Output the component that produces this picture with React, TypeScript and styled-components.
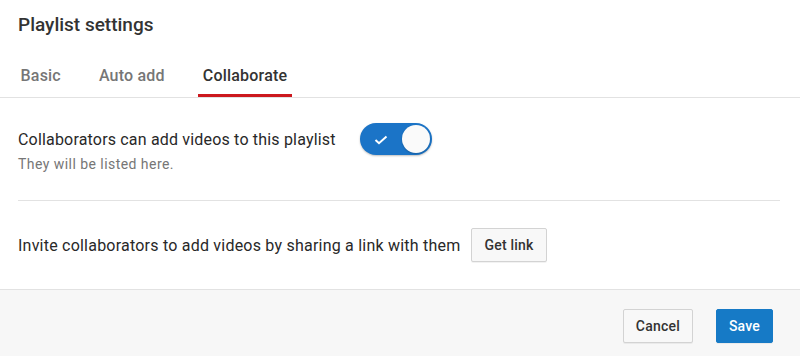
import React, { useState } from 'react';
import styled, { createGlobalStyle } from 'styled-components';

const GlobalStyle = createGlobalStyle`
  html, body {
    margin: 0;
    padding: 0;
    background: #fff;
  }
  body {
    font-family: Roboto, 'Liberation Sans', Arial, sans-serif;
    color: #282828;
    -webkit-font-smoothing: antialiased;
  }
`;

const Dialog = styled.div`
  width: 800px;
  height: 356px;
  display: flex;
  flex-direction: column;
  background: #fff;
  overflow: hidden;
`;

const Title = styled.h1`
  margin: 0;
  padding: 13px 18px 0;
  height: 23px;
  line-height: 23px;
  font-size: 19px;
  font-weight: 500;
  color: #333;
`;

const Tabs = styled.div`
  display: flex;
  gap: 29px;
  padding: 0 16px;
  height: 62px;
  box-sizing: border-box;
  align-items: flex-end;
  border-bottom: 1px solid #e2e2e2;
`;

const Tab = styled.button<{ $active?: boolean }>`
  border: 0;
  background: none;
  padding: 0 4.5px;
  height: 40px;
  box-sizing: border-box;
  font-family: inherit;
  font-size: 16px;
  letter-spacing: 0.2px;
  font-weight: 500;
  color: ${p => (p.$active ? '#333' : '#767676')};
  border-bottom: 3px solid ${p => (p.$active ? '#cc181e' : 'transparent')};
  cursor: pointer;
  display: flex;
  align-items: center;
`;

const Body = styled.div`
  padding: 0 20px 0 18px;
  flex: 1;
  display: flex;
  flex-direction: column;
`;

const Section = styled.div`
  padding-top: 25px;
  height: 77px;
  border-bottom: 1px solid #e2e2e2;
`;

const OptionRow = styled.div`
  display: flex;
  align-items: center;
  height: 32px;
  gap: 24px;
`;

const Label = styled.span`
  font-size: 16px;
  letter-spacing: 0.18px;
  color: #282828;
`;

const Hint = styled.div`
  font-size: 14px;
  letter-spacing: 0.45px;
  line-height: 18px;
  color: #767676;
`;

const Track = styled.button<{ $on: boolean }>`
  position: relative;
  width: 72px;
  height: 32px;
  border: 0;
  padding: 0;
  border-radius: 16px;
  background: ${p => (p.$on ? '#1b74c7' : '#b8b8b8')};
  box-shadow: 0 1px 2px rgba(0, 0, 0, 0.25);
  cursor: pointer;
  svg {
    position: absolute;
    left: 14px;
    top: 12px;
  }
`;

const Knob = styled.span<{ $on: boolean }>`
  position: absolute;
  top: 2px;
  left: ${p => (p.$on ? '42px' : '2px')};
  width: 28px;
  height: 28px;
  border-radius: 50%;
  background: #fafafa;
  box-shadow: 0 1px 2px rgba(0, 0, 0, 0.2);
`;

const InviteRow = styled.div`
  flex: 1;
  display: flex;
  align-items: center;
  gap: 11px;
  font-size: 16px;
  letter-spacing: 0.22px;
`;

const Button = styled.button<{ $primary?: boolean }>`
  height: 34px;
  padding: 0 12px;
  border-radius: 2px;
  font-family: inherit;
  font-size: 14px;
  letter-spacing: 0.2px;
  font-weight: 500;
  cursor: pointer;
  border: 1px solid ${p => (p.$primary ? '#167ac6' : '#d3d3d3')};
  background: ${p => (p.$primary ? '#167ac6' : '#f8f8f8')};
  color: ${p => (p.$primary ? '#fff' : '#333')};
  box-shadow: 0 1px 0 rgba(0, 0, 0, 0.05);
`;

const Footer = styled.div`
  height: 67px;
  box-sizing: border-box;
  border-top: 1px solid #e2e2e2;
  background: #f7f7f7;
  display: flex;
  justify-content: flex-end;
  align-items: flex-start;
  gap: 23px;
  padding: 19px 27px 0 0;
`;

export default function App() {
  const [on, setOn] = useState(true);
  const tabs = ['Basic', 'Auto add', 'Collaborate'];

  return (
    <>
      <GlobalStyle />
      <Dialog>
        <Title>Playlist settings</Title>
        <Tabs>
          {tabs.map(t => (
            <Tab key={t} $active={t === 'Collaborate'}>
              {t}
            </Tab>
          ))}
        </Tabs>
        <Body>
          <Section>
            <OptionRow>
              <Label>Collaborators can add videos to this playlist</Label>
              <Track $on={on} onClick={() => setOn(!on)}>
                {on && (
                  <svg width="14" height="10" viewBox="0 0 14 10">
                    <path d="M1.5 5 L5 8.2 L12.5 1.5" fill="none" stroke="#fff" strokeWidth="2" />
                  </svg>
                )}
                <Knob $on={on} />
              </Track>
            </OptionRow>
            <Hint>They will be listed here.</Hint>
          </Section>
          <InviteRow>
            <span>Invite collaborators to add videos by sharing a link with them</span>
            <Button>Get link</Button>
          </InviteRow>
        </Body>
        <Footer>
          <Button>Cancel</Button>
          <Button $primary>Save</Button>
        </Footer>
      </Dialog>
    </>
  );
}
